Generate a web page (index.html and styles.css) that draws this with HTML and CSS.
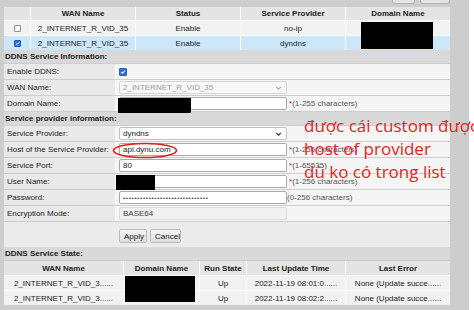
FILE: index.html
```html
<!DOCTYPE html>
<html lang="vi">
<head>
  <meta charset="UTF-8">
  <title>DDNS</title>
  <link rel="stylesheet" href="styles.css">
</head>
<body>
  <div class="screen">
    <div class="topbar">
      <span class="stub stub-a"></span>
      <span class="stub stub-b"></span>
    </div>

    <div class="panel">
      <!-- danh sach WAN -->
      <div class="wan-list">
        <div class="row head">
          <div></div>
          <div>WAN Name</div>
          <div>Status</div>
          <div>Service Provider</div>
          <div>Domain Name</div>
        </div>
        <div class="row">
          <div><span class="cb"></span></div>
          <div>2_INTERNET_R_VID_35</div>
          <div>Enable</div>
          <div>no-ip</div>
          <div></div>
        </div>
        <div class="row selected">
          <div><span class="cb on"><svg viewBox="0 0 8 8"><path d="M1.6 4.2 L3.3 5.8 L6.4 2.2" /></svg></span></div>
          <div>2_INTERNET_R_VID_35</div>
          <div>Enable</div>
          <div>dyndns</div>
          <div></div>
        </div>
      </div>

      <div class="section">DDNS Service Information:</div>
      <div class="form-row">
        <div class="label">Enable DDNS:</div>
        <div class="value"><span class="cb big on"><svg viewBox="0 0 8 8"><path d="M1.6 4.2 L3.3 5.8 L6.4 2.2" /></svg></span></div>
      </div>
      <div class="form-row">
        <div class="label">WAN Name:</div>
        <div class="value">
          <span class="field select disabled">2_INTERNET_R_VID_35<svg class="chev" viewBox="0 0 8 5"><path d="M1 1 L4 4 L7 1" /></svg></span>
        </div>
      </div>
      <div class="form-row">
        <div class="label">Domain Name:</div>
        <div class="value">
          <span class="field"></span><span class="req">*</span><span class="hint">(1-255 characters)</span>
        </div>
      </div>

      <div class="section">Service provider information:</div>
      <div class="form-row">
        <div class="label">Service Provider:</div>
        <div class="value">
          <span class="field select">dyndns<svg class="chev" viewBox="0 0 8 5"><path d="M1 1 L4 4 L7 1" /></svg></span>
        </div>
      </div>
      <div class="form-row">
        <div class="label">Host of the Service Provider:</div>
        <div class="value">
          <span class="field">api.dynu.com</span><span class="req">*</span><span class="hint">(1-256 characters)</span>
        </div>
      </div>
      <div class="form-row">
        <div class="label">Service Port:</div>
        <div class="value">
          <span class="field">80</span><span class="req">*</span><span class="hint">(1-65535)</span>
        </div>
      </div>
      <div class="form-row">
        <div class="label">User Name:</div>
        <div class="value">
          <span class="field"></span><span class="req">*</span><span class="hint">(1-256 characters)</span>
        </div>
      </div>
      <div class="form-row">
        <div class="label">Password:</div>
        <div class="value">
          <span class="field dots">••••••••••••••••••••••••••••••</span><span class="hint">(0-256 characters)</span>
        </div>
      </div>
      <div class="form-row">
        <div class="label">Encryption Mode:</div>
        <div class="value">
          <span class="field readonly">BASE64</span>
        </div>
      </div>

      <div class="actions">
        <button class="btn">Apply</button>
        <button class="btn">Cancel</button>
      </div>

      <div class="section">DDNS Service State:</div>
      <div class="state-list">
        <div class="row head">
          <div>WAN Name</div>
          <div>Domain Name</div>
          <div>Run State</div>
          <div>Last Update Time</div>
          <div>Last Error</div>
        </div>
        <div class="row">
          <div>2_INTERNET_R_VID_3......</div>
          <div></div>
          <div>Up</div>
          <div>2022-11-19 08:01:0......</div>
          <div>None (Update succe......</div>
        </div>
        <div class="row">
          <div>2_INTERNET_R_VID_3......</div>
          <div></div>
          <div>Up</div>
          <div>2022-11-19 08:02:2......</div>
          <div>None (Update succe......</div>
        </div>
      </div>
    </div>

    <!-- cac o che thong tin -->
    <span class="redact redact-top"></span>
    <span class="redact redact-domain"></span>
    <span class="redact redact-user"></span>
    <span class="redact redact-state"></span>

    <!-- ghi chu do -->
    <svg class="circle" viewBox="0 0 66 17"><ellipse cx="33" cy="8.5" rx="31.5" ry="7" /></svg>
    <div class="note">được cái custom được<br>host of provider<br>dù ko có trong list</div>
  </div>
</body>
</html>
```

FILE: styles.css
```css
* {
  margin: 0;
  padding: 0;
  box-sizing: border-box;
}

html {
  overflow: hidden;
}

body {
  width: 474px;
  height: 310px;
  overflow: hidden;
  background: #fff;
  font-family: "Liberation Sans", Arial, sans-serif;
  font-size: 8px;
  color: #222;
}

.screen {
  position: relative;
  width: 469px;
  height: 310px;
  background: #cdcdcd;
}

.topbar {
  height: 7px;
  display: flex;
  justify-content: flex-end;
  gap: 5px;
  padding-right: 19px;
}

.stub {
  height: 4px;
  background: #e4e4e4;
  border: 1px solid #b4b4b4;
  border-top: none;
  border-radius: 0 0 3px 3px;
}

.stub-a { width: 23px; }
.stub-b { width: 30px; }

.panel {
  margin-left: 4px;
  width: 446px;
}

/* bang danh sach */
.wan-list,
.state-list {
  display: flex;
  flex-direction: column;
  gap: 1px;
  background: #fafafa;
}

.row {
  display: grid;
  gap: 1px;
  height: 14px;
}

.wan-list .row {
  grid-template-columns: 26px repeat(4, 1fr);
}

.state-list .row {
  grid-template-columns: 119px 75px 46px 98px 1fr;
}

.row > div {
  background: #f2f2f2;
  display: flex;
  align-items: center;
  justify-content: center;
  white-space: nowrap;
  overflow: hidden;
}

.row.head {
  height: 13px;
  font-weight: bold;
}

.row.head > div {
  background: #e4e4e4;
}

.row.selected > div {
  background: #cde7fa;
}

.state-list .row.head {
  height: 14px;
}

.cb {
  display: inline-block;
  width: 7px;
  height: 7px;
  border: 1px solid #8e8e8e;
  border-radius: 1px;
  background: #fff;
}

.cb.big {
  width: 8px;
  height: 8px;
}

.cb.on {
  background: #2f6fd8;
  border-color: #2a5fb8;
}

.cb svg {
  display: block;
  width: 100%;
  height: 100%;
  fill: none;
  stroke: #fff;
  stroke-width: 1.4;
}

/* form */
.section {
  height: 13px;
  background: #d9d9d9;
  font-weight: bold;
  display: flex;
  align-items: center;
  padding-left: 1px;
}

.section + .form-row {
  margin-top: 1px;
}

.form-row {
  display: grid;
  grid-template-columns: 111px 1fr;
  gap: 1px;
  height: 15px;
  margin-bottom: 1px;
  background: #fafafa;
}

.label {
  background: #e9e9e9;
  display: flex;
  align-items: center;
  padding-left: 3px;
  white-space: nowrap;
}

.value {
  background: #f5f5f5;
  display: flex;
  align-items: center;
  padding-left: 3px;
}

.field {
  position: relative;
  display: flex;
  align-items: center;
  width: 168px;
  height: 13px;
  padding-left: 3px;
  background: #fff;
  border: 1px solid #a9a9a9;
  border-radius: 2px;
  white-space: nowrap;
  overflow: hidden;
}

.field.select {
  border-color: #c2c2c2;
}

.field.disabled {
  background: #f7f7f7;
  border-color: #d6d6d6;
  color: #a0a0a0;
}

.field.readonly {
  background: #f0f0f0;
  border-color: #dcdcdc;
  color: #444;
}

.field.dots {
  font-size: 6px;
  letter-spacing: 0.75px;
  color: #333;
}

.chev {
  position: absolute;
  right: 4px;
  top: 4px;
  width: 7px;
  height: 4px;
  fill: none;
  stroke: #333;
  stroke-width: 1.3;
}

.disabled .chev {
  stroke: #b0b0b0;
}

.req {
  color: #d41111;
  margin-left: 2px;
}

.hint {
  color: #555;
  white-space: nowrap;
}

.actions {
  height: 25px;
  background: #ebebeb;
  display: flex;
  gap: 3px;
  padding: 7px 0 0 115px;
}

.btn {
  height: 14px;
  padding: 0 4px;
  font-family: "Liberation Sans", Arial, sans-serif;
  font-size: 8px;
  color: #222;
  background: linear-gradient(#f4f4f4, #dcdcdc);
  border: 1px solid #bdbdbd;
  border-radius: 2px;
}

.btn:first-child {
  width: 28px;
}

.btn:last-child {
  width: 31px;
}

.state-list {
  margin-top: 1px;
}

/* o che */
.redact {
  position: absolute;
  background: #000;
}

.redact-top { left: 361px; top: 22px; width: 72px; height: 27px; }
.redact-domain { left: 118px; top: 98px; width: 73px; height: 15px; }
.redact-user { left: 116px; top: 175px; width: 39px; height: 15px; }
.redact-state { left: 125px; top: 276px; width: 70px; height: 26px; }

/* ghi chu do */
.circle {
  position: absolute;
  left: 112px;
  top: 142px;
  width: 66px;
  height: 17px;
  fill: none;
  stroke: #d8231b;
  stroke-width: 1.6;
}

.note {
  position: absolute;
  left: 304px;
  top: 114px;
  font-family: "Open Sans", sans-serif;
  font-size: 17px;
  line-height: 23px;
  color: #e2261e;
  white-space: nowrap;
}
```
